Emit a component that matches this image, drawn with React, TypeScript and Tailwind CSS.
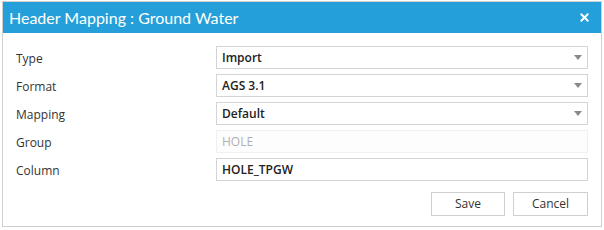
import { X } from 'lucide-react'

const font = { fontFamily: '"Open Sans", "Noto Sans", Arial, sans-serif' }

function Caret() {
  return (
    <svg width="8" height="5" viewBox="0 0 8 5" className="shrink-0">
      <path d="M0 0 L8 0 L4 5 Z" fill="#8a8a8a" />
    </svg>
  )
}

function SelectBox({ value }: { value: string }) {
  return (
    <div className="flex h-[23px] items-center justify-between border border-[#d4d4d4] bg-white pl-[5px] pr-[5px]">
      <span className="text-[12px] font-semibold text-[#222]">{value}</span>
      <Caret />
    </div>
  )
}

function Row({ label, children }: { label: string; children: React.ReactNode }) {
  return (
    <div className="grid grid-cols-[200px_372px] items-center">
      <span className="pt-[2px] text-[12px] text-[#333]">{label}</span>
      {children}
    </div>
  )
}

export default function App() {
  return (
    <div className="h-[230px] w-[604px] bg-white pl-[2px] pt-[1px]" style={font}>
      <div className="flex h-[226px] w-[600px] flex-col border border-[#cfcfcf] bg-white">
        <div className="flex h-[31px] items-center justify-between bg-[#259fd9] pl-[6px] pr-[10px]">
          <span className="text-[16px] text-white" style={{ fontFamily: 'Lato, "Open Sans", sans-serif' }}>
            Header Mapping : Ground Water
          </span>
          <X className="h-[13px] w-[13px] text-white" strokeWidth={3.5} />
        </div>
        <div className="flex flex-col gap-[5px] pl-[13px] pr-[13px] pt-[13px]">
          <Row label="Type">
            <SelectBox value="Import" />
          </Row>
          <Row label="Format">
            <SelectBox value="AGS 3.1" />
          </Row>
          <Row label="Mapping">
            <SelectBox value="Default" />
          </Row>
          <Row label="Group">
            <div className="flex h-[23px] items-center border border-[#f0f0f0] bg-[#fdfdfd] pl-[5px]">
              <span className="text-[12px] text-[#b0b0b0]">HOLE</span>
            </div>
          </Row>
          <Row label="Column">
            <div className="flex h-[23px] items-center border border-[#d4d4d4] bg-white pl-[5px]">
              <span className="text-[12px] font-semibold text-[#222]">HOLE_TPGW</span>
            </div>
          </Row>
          <div className="mt-[6px] flex justify-end gap-[8px]">
            <button className="h-[24px] w-[74px] border border-[#cfcfcf] bg-white text-[12px] text-[#333]">
              Save
            </button>
            <button className="h-[24px] w-[75px] border border-[#cfcfcf] bg-white text-[12px] text-[#333]">
              Cancel
            </button>
          </div>
        </div>
      </div>
    </div>
  )
}
